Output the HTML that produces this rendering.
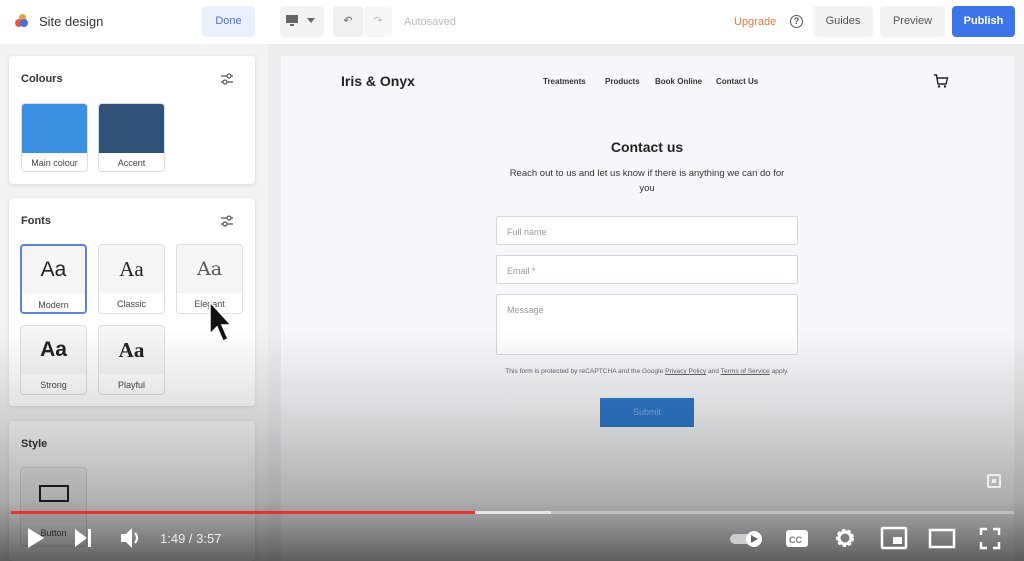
<!DOCTYPE html>
<html><head><meta charset="utf-8"><style>
*{box-sizing:border-box;margin:0;padding:0}
body{width:1024px;height:561px;overflow:hidden;background:#fff;font-family:"Liberation Sans",sans-serif;position:relative}
.abs{position:absolute}
.top{left:0;top:0;width:1024px;height:44px;background:#fff}
.left{left:0;top:44px;width:268px;height:517px;background:#f3f3f4}
.canvas{left:268px;top:44px;width:756px;height:517px;background:#ededef}
.page{left:281px;top:56px;width:733px;height:505px;background:#f7f8fb}
.card{background:#fff;border-radius:4px;box-shadow:0 1px 4px rgba(0,0,0,.12);left:9px;width:246px}
.ct{font-size:11px;font-weight:bold;color:#333}
.tile{border:1px solid #ddd;border-radius:4px;background:#f6f6f7;width:67px;height:70px;text-align:center;overflow:hidden}
.tile .aa{height:48px;line-height:48px;font-size:21px;color:#222}
.tile .lb{height:22px;line-height:22px;font-size:9px;color:#444;background:#fff}
.btn{border-radius:4px;font-size:11px;text-align:center;line-height:31px;height:31px;top:6px}
.inp{left:496px;width:302px;background:#fff;border:1px solid #d6d6d8;border-radius:2px;font-size:9px;color:#999;padding:10px}
.nav{font-size:8px;font-weight:bold;color:#333;top:77px}
</style></head><body>
<div class="abs top"></div>
<div class="abs" style="left:15px;top:14px;width:14px;height:14px">
<span class="abs" style="left:4px;top:0;width:7px;height:7px;border-radius:50%;background:#e9a03b"></span>
<span class="abs" style="left:0;top:5px;width:8px;height:8px;border-radius:50%;background:#e8564f"></span>
<span class="abs" style="left:5px;top:5px;width:8px;height:8px;border-radius:50%;background:#4c6ee0"></span></div>
<div class="abs" style="left:39px;top:14px;font-size:13px;color:#333">Site design</div>
<div class="abs btn" style="left:202px;width:53px;background:#eaf0fc;color:#4a6fd8">Done</div>
<div class="abs btn" style="left:280px;width:44px;background:#f3f3f4"></div>
<svg class="abs" style="left:286px;top:14px" width="32" height="16" viewBox="0 0 32 16"><rect x="0" y="1" width="12" height="8" fill="#666"/><rect x="4" y="10" width="4" height="2" fill="#666"/><path d="M21 4 H29 L25 9 Z" fill="#666"/></svg>
<div class="abs btn" style="left:333px;width:30px;background:#f0f0f1;color:#666">↶</div>
<div class="abs btn" style="left:364px;width:28px;background:#f7f7f8;color:#bbb">↷</div>
<div class="abs" style="left:404px;top:16px;font-size:11px;color:#bbb">Autosaved</div>
<div class="abs" style="left:734px;top:16px;font-size:11px;color:#e07a3a">Upgrade</div>
<div class="abs" style="left:790px;top:15px;width:13px;height:13px;border:1.5px solid #555;border-radius:50%;font-size:9px;text-align:center;line-height:10px;color:#555;font-weight:bold">?</div>
<div class="abs btn" style="left:813px;width:60px;background:#f3f3f4;color:#555">Guides</div>
<div class="abs btn" style="left:880px;width:65px;background:#f3f3f4;color:#555">Preview</div>
<div class="abs btn" style="left:952px;width:63px;background:#3d74e8;color:#fff;font-weight:bold">Publish</div>

<div class="abs left"></div>
<div class="abs canvas"></div>
<div class="abs page"></div>

<div class="abs card" style="top:56px;height:128px"></div>
<div class="abs ct" style="left:21px;top:73px">Colours</div>
<svg class="abs" style="left:220px;top:72px" width="14" height="14" viewBox="0 0 14 14"><path d="M1 4 H13 M1 10 H13" stroke="#555" stroke-width="1.2"/><circle cx="9" cy="4" r="2" fill="#fff" stroke="#555" stroke-width="1.2"/><circle cx="5" cy="10" r="2" fill="#fff" stroke="#555" stroke-width="1.2"/></svg>
<div class="abs tile" style="left:21px;top:103px;height:69px;background:#fff"><div style="height:49px;background:#3a8fe0"></div><div class="lb" style="height:20px;line-height:20px">Main colour</div></div>
<div class="abs tile" style="left:98px;top:103px;height:69px;background:#fff"><div style="height:49px;background:#2f5278"></div><div class="lb" style="height:20px;line-height:20px">Accent</div></div>

<div class="abs card" style="top:198px;height:208px"></div>
<div class="abs ct" style="left:21px;top:215px">Fonts</div>
<svg class="abs" style="left:220px;top:214px" width="14" height="14" viewBox="0 0 14 14"><path d="M1 4 H13 M1 10 H13" stroke="#555" stroke-width="1.2"/><circle cx="9" cy="4" r="2" fill="#fff" stroke="#555" stroke-width="1.2"/><circle cx="5" cy="10" r="2" fill="#fff" stroke="#555" stroke-width="1.2"/></svg>
<div class="abs tile" style="left:20px;top:244px;border:2px solid #5c82e0"><div class="aa">Aa</div><div class="lb">Modern</div></div>
<div class="abs tile" style="left:98px;top:244px"><div class="aa" style="font-family:'Liberation Serif',serif">Aa</div><div class="lb">Classic</div></div>
<div class="abs tile" style="left:176px;top:244px"><div class="aa" style="font-family:'DejaVu Serif',serif;font-size:19px;color:#555">Aa</div><div class="lb">Elegant</div></div>
<div class="abs tile" style="left:20px;top:325px"><div class="aa" style="font-weight:bold">Aa</div><div class="lb">Strong</div></div>
<div class="abs tile" style="left:98px;top:325px"><div class="aa" style="font-family:'Liberation Serif',serif;font-weight:bold">Aa</div><div class="lb">Playful</div></div>
<svg class="abs" style="left:207px;top:300px" width="26" height="50" viewBox="0 0 26 50"><path d="M3 2 L3 34 L10 27 L16 41 L21 39 L15 25 L24 25 Z" fill="#111" stroke="#fff" stroke-width="1.5"/></svg>

<div class="abs card" style="top:421px;height:140px"></div>
<div class="abs ct" style="left:21px;top:438px">Style</div>
<div class="abs tile" style="left:20px;top:467px;height:80px"><div style="height:54px;padding-top:17px"><div style="margin:0 auto;width:30px;height:17px;border:2px solid #222"></div></div><div class="lb">Button</div></div>

<div class="abs" style="left:341px;top:73px;font-size:14px;font-weight:bold;color:#222">Iris &amp; Onyx</div>
<div class="abs nav" style="left:543px">Treatments</div>
<div class="abs nav" style="left:605px">Products</div>
<div class="abs nav" style="left:655px">Book Online</div>
<div class="abs nav" style="left:716px">Contact Us</div>
<svg class="abs" style="left:933px;top:73px" width="16" height="16" viewBox="0 0 16 16"><path d="M1 2 H3.5 L5 11 H13 L14.5 5 H4" fill="none" stroke="#222" stroke-width="1.4"/><circle cx="6" cy="13.5" r="1.2" fill="#222"/><circle cx="12" cy="13.5" r="1.2" fill="#222"/></svg>
<div class="abs" style="left:497px;top:139px;width:300px;text-align:center;font-size:14px;font-weight:bold;color:#222">Contact us</div>
<div class="abs" style="left:497px;top:166px;width:300px;text-align:center;font-size:9.5px;line-height:15px;color:#333;padding:0 4px">Reach out to us and let us know if there is anything we can do for you</div>
<div class="abs inp" style="top:216px;height:29px">Full name</div>
<div class="abs inp" style="top:255px;height:29px">Email *</div>
<div class="abs inp" style="top:294px;height:61px">Message</div>
<div class="abs" style="left:496px;top:366px;width:302px;text-align:center;font-size:6.6px;line-height:11px;color:#666">This form is protected by reCAPTCHA and the Google <u>Privacy Policy</u> and <u>Terms of Service</u> apply.</div>
<div class="abs" style="left:600px;top:398px;width:94px;height:29px;background:#2f7acb;color:#7fb0e6;font-size:9px;text-align:center;line-height:29px">Submit</div>

<div class="abs" style="left:0;top:330px;width:1024px;height:231px;background:linear-gradient(rgba(0,0,0,0),rgba(0,0,0,.1) 30%,rgba(0,0,0,.2) 52%,rgba(0,0,0,.3) 74%,rgba(0,0,0,.62))"></div>
<div class="abs" style="left:987px;top:474px;width:14px;height:14px;border:2px solid #eee;border-radius:2px"><div style="margin:3px;width:4px;height:4px;background:#eee"></div></div>

<div class="abs" style="left:11px;top:511px;width:1003px;height:3px;background:rgba(255,255,255,.35)"></div>
<div class="abs" style="left:11px;top:511px;width:540px;height:3px;background:rgba(255,255,255,.6)"></div>
<div class="abs" style="left:11px;top:511px;width:464px;height:3px;background:#e8322a"></div>

<svg class="abs" style="left:0;top:522px" width="1024" height="32" viewBox="0 0 1024 32">
<path d="M28 6 L44 16 L28 26 Z" fill="#fff"/>
<path d="M75 7 L87 16 L75 25 Z M88 7 H91 V25 H88 Z" fill="#fff"/>
<path d="M121 12 H126 L132 6 V26 L126 20 H121 Z" fill="#fff"/>
<path d="M135 11 Q139 16 135 21" stroke="#fff" stroke-width="2" fill="none"/>
<text x="160" y="21" font-family="Liberation Sans" font-size="13" fill="#eee">1:49 / 3:57</text>
<rect x="730" y="12" width="26" height="10" rx="5" fill="#ccc"/>
<circle cx="754" cy="17" r="8" fill="#fff"/><path d="M751 13 L758 17 L751 21Z" fill="#666"/>
<rect x="786" y="8" width="22" height="17" rx="3" fill="#fff"/><text x="789" y="21" font-size="9" font-weight="bold" fill="#777" font-family="Liberation Sans">CC</text>
<circle cx="845" cy="16" r="7" fill="none" stroke="#fff" stroke-width="4" stroke-dasharray="3 2"/><circle cx="845" cy="16" r="6" fill="none" stroke="#fff" stroke-width="3"/>
<rect x="882" y="6" width="24" height="20" rx="1" fill="none" stroke="#fff" stroke-width="2.5"/><rect x="893" y="15" width="9" height="7" fill="#fff"/>
<rect x="930" y="8" width="24" height="17" fill="none" stroke="#fff" stroke-width="2.5"/>
<path d="M981 13 V7 H987 M993 7 H999 V13 M999 20 V26 H993 M987 26 H981 V20" stroke="#fff" stroke-width="2.5" fill="none"/>
</svg>
</body></html>
